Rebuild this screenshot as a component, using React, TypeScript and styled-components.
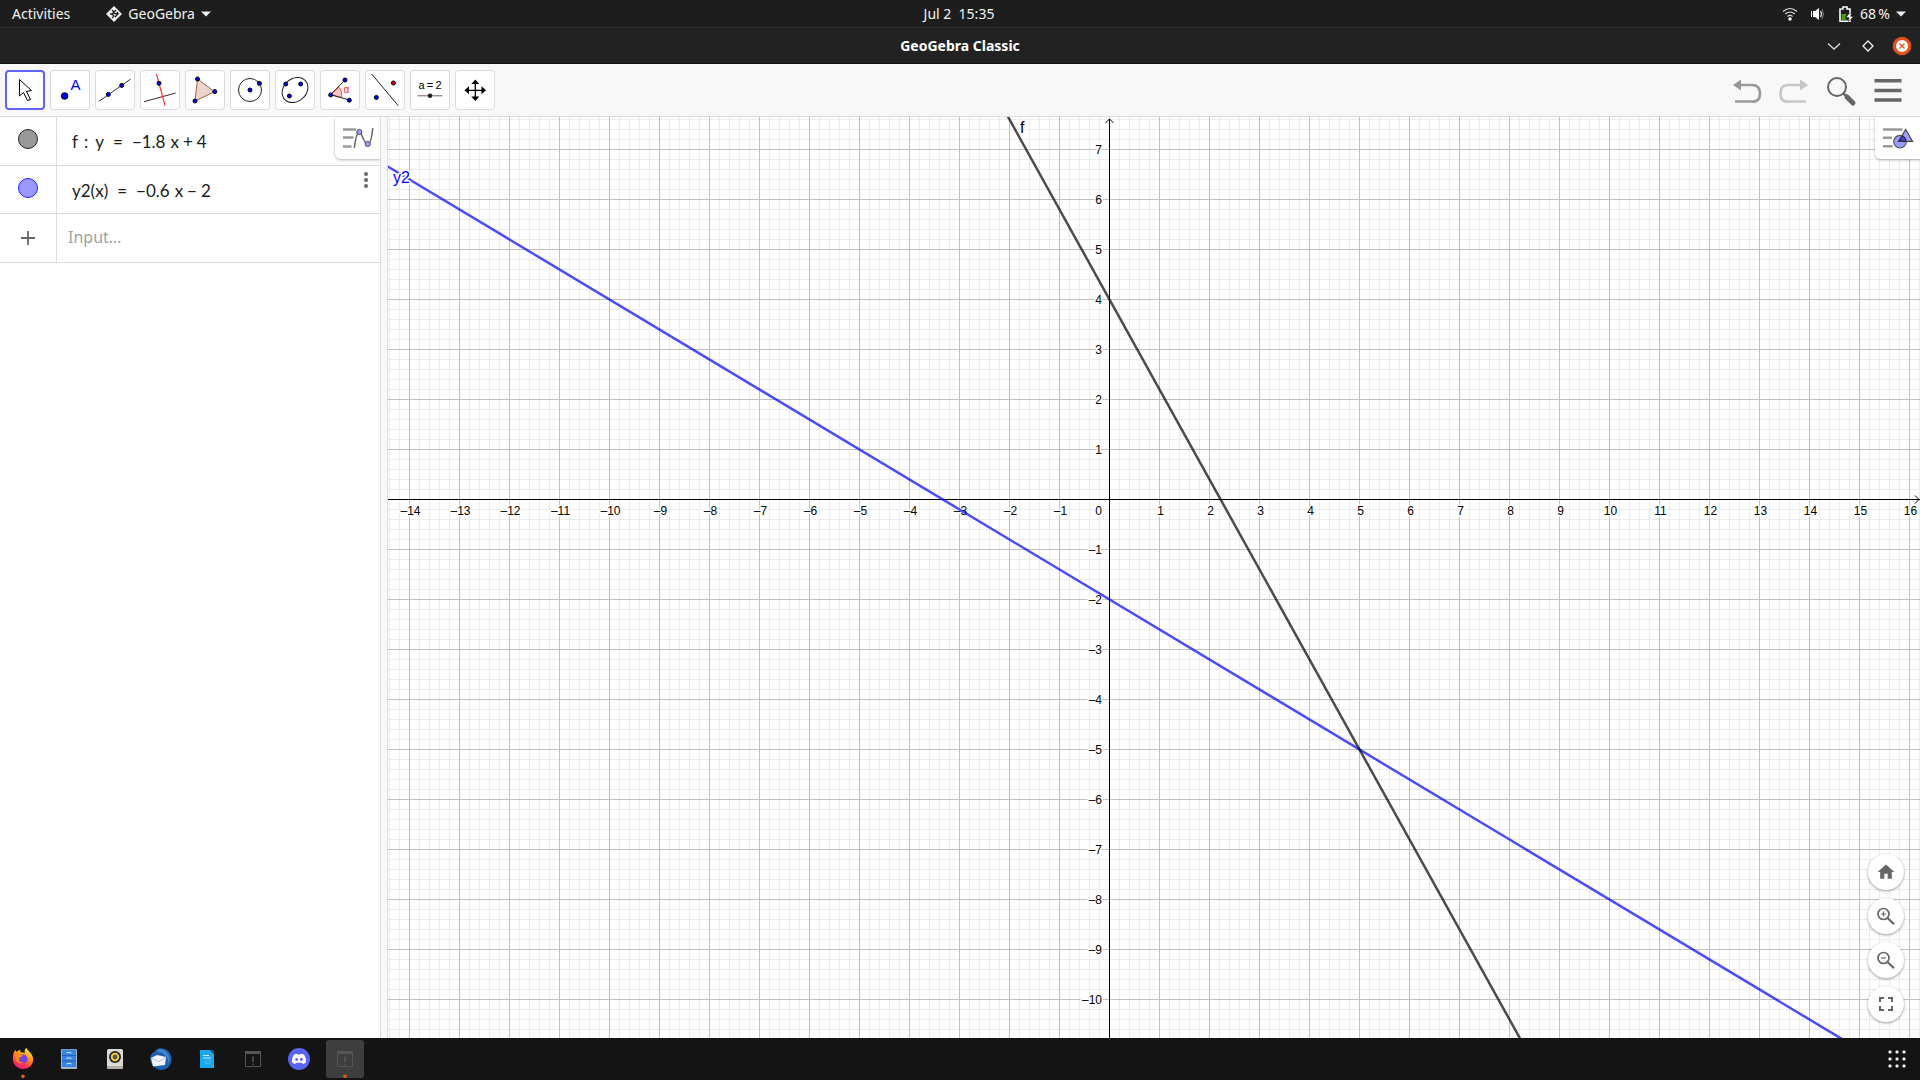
import React, { useLayoutEffect, useRef, useState } from "react";
import styled, { createGlobalStyle } from "styled-components";

const UI_FONT = '"Noto Sans", "Open Sans", sans-serif';
const PLOT_FONT = '"Liberation Sans", Arial, sans-serif';
const MATH_FONT = 'Lato, "Noto Sans", sans-serif';

const GlobalStyle = createGlobalStyle`
  * { box-sizing: border-box; }
  body { margin: 0; background: #fff; font-family: ${UI_FONT}; }
  button { font: inherit; color: inherit; margin: 0; padding: 0; border: 0; background: none; }
  svg { display: block; flex: none; }
`;

const Desktop = styled.div`
  display: flex;
  flex-direction: column;
  height: 100vh;
  overflow: hidden;
`;

/* ---------- system bar ---------- */

const SystemBar = styled.header`
  display: grid;
  grid-template-columns: 1fr auto 1fr;
  align-items: center;
  height: 28px;
  padding: 0 14px 0 12px;
  background: #1d1d1d;
  border-bottom: 1px solid #2e2e2e;
  color: #f2f2f2;
  font-size: 14px;
  line-height: 20px;
`;

const SystemGroup = styled.div<{ $end?: boolean }>`
  display: flex;
  align-items: center;
  gap: 36px;
  justify-content: ${(p) => (p.$end ? "flex-end" : "flex-start")};
`;

const SystemButton = styled.button`
  display: flex;
  align-items: center;
  gap: 6px;
  white-space: pre;
`;

const Indicators = styled.span`
  display: flex;
  align-items: center;
  gap: 12px;
`;

/* ---------- window title ---------- */

const TitleBar = styled.div`
  display: grid;
  grid-template-columns: 1fr auto 1fr;
  align-items: center;
  height: 36px;
  padding: 0 8px;
  background: #222;
  border-bottom: 1px solid #161616;
  color: #fff;
`;

const Title = styled.h1`
  grid-column: 2;
  margin: 0;
  font-size: 14px;
  line-height: 20px;
  font-weight: 700;
`;

const WindowControls = styled.div`
  display: flex;
  justify-content: flex-end;
  gap: 14px;
`;

/* ---------- toolbar ---------- */

const Toolbar = styled.nav`
  display: flex;
  justify-content: space-between;
  align-items: center;
  height: 53px;
  padding: 0 12px 0 5px;
  background: #f8f8f8;
  border-bottom: 1px solid #dcdcdc;
`;

const ToolGroup = styled.div<{ $gap: number }>`
  display: flex;
  gap: ${(p) => p.$gap}px;
`;

const ToolButton = styled.button<{ $selected?: boolean }>`
  width: 40px;
  height: 40px;
  border-radius: 4px;
  background: #fff;
  box-shadow: inset 0 0 0 ${(p) => (p.$selected ? "2px #6161ff" : "1px #dcdcdc")};
`;

const ActionButton = styled.button`
  width: 40px;
  height: 40px;
`;

/* ---------- workspace ---------- */

const Workspace = styled.main`
  display: flex;
  flex: 1;
  min-height: 0;
`;

const AlgebraPanel = styled.section`
  position: relative;
  width: 381px;
  flex: none;
  background: #fff;
  border-right: 1px solid #dcdcdc;
`;

const Splitter = styled.div`
  width: 7px;
  flex: none;
  background: #f8f8f8;
  border-right: 1px solid #dcdcdc;
`;

const StyleToggle = styled.button`
  position: absolute;
  top: 0;
  right: 0;
  width: 45px;
  height: 42px;
  background: #fff;
  border-radius: 0 0 0 6px;
  box-shadow: 0 1px 3px rgba(0, 0, 0, 0.3);
  clip-path: inset(0 0 -6px -6px);
`;

const Rows = styled.ul`
  margin: 0;
  padding: 0;
  list-style: none;
`;

const Row = styled.li<{ $height?: number }>`
  display: flex;
  height: ${(p) => p.$height ?? 49}px;
  border-bottom: 1px solid #dcdcdc;
`;

const MarkerCell = styled.div`
  display: flex;
  justify-content: center;
  width: 57px;
  padding-top: 12px;
  flex: none;
  border-right: 1px solid #dcdcdc;
`;

const Marker = styled.button<{ $fill: string; $line: string }>`
  width: 20px;
  height: 20px;
  border-radius: 50%;
  background: ${(p) => p.$fill};
  border: 1px solid ${(p) => p.$line};
`;

const AddButton = styled.button`
  width: 20px;
  height: 24px;
  color: #666;
`;

const Formula = styled.div`
  display: flex;
  align-items: center;
  flex: 1;
  padding: 2px 0 0 15px;
  font-family: ${MATH_FONT};
  font-size: 17px;
  line-height: 24px;
  color: #1c1c1c;
`;

const Relation = styled.span`
  margin: 0 9px;
`;

const Colon = styled.span`
  margin: 0 7px 0 6px;
`;

const Thin = styled.span`
  margin-left: 5px;
`;

const Operator = styled.span`
  margin: 0 4px;
`;

const MoreButton = styled.button`
  width: 20px;
  height: 28px;
  margin-right: 4px;
`;

const FormulaInput = styled.input`
  flex: 1;
  min-width: 0;
  border: 0;
  outline: 0;
  padding: 0 12px 3px 11px;
  background: transparent;
  font: 16px/24px ${UI_FONT};
  color: #1c1c1c;
  &::placeholder { color: #a0a0a0; opacity: 1; }
`;

/* ---------- graphics view ---------- */

const GraphPanel = styled.section`
  position: relative;
  flex: 1;
  min-width: 0;
  overflow: hidden;
  background: #fff;
`;

const Plot = styled.svg`
  width: 100%;
  height: 100%;
  font-family: ${PLOT_FONT};
  text {
    paint-order: stroke;
    stroke: #fff;
    stroke-width: 3px;
    stroke-linejoin: round;
  }
`;

const ViewButtons = styled.div`
  position: absolute;
  right: 16px;
  bottom: 16px;
  display: flex;
  flex-direction: column;
  gap: 8px;
`;

const RoundButton = styled.button`
  display: flex;
  align-items: center;
  justify-content: center;
  width: 36px;
  height: 36px;
  border-radius: 50%;
  background: #fff;
  color: #666;
  box-shadow: 0 1px 3px rgba(0, 0, 0, 0.4);
`;

/* ---------- dock ---------- */

const Dock = styled.footer`
  display: flex;
  align-items: center;
  justify-content: space-between;
  height: 42px;
  flex: none;
  padding: 0 4px;
  background: #141414;
`;

const DockApps = styled.div`
  display: flex;
  gap: 8px;
`;

const DockButton = styled.button<{ $active?: boolean }>`
  width: 38px;
  height: 38px;
  border-radius: 3px;
  background: ${(p) => (p.$active ? "#3e3e3e" : "transparent")};
`;

/* ---------- plot ---------- */

const UNIT = 50;
const ORIGIN_X = 721;
const ORIGIN_Y = 382;

const label = (n: number) => (n < 0 ? `–${-n}` : `${n}`);
const range = (from: number, to: number) =>
  Array.from({ length: Math.max(0, to - from + 1) }, (_, i) => from + i);

function Graph() {
  const ref = useRef<SVGSVGElement>(null);
  const [size, setSize] = useState({ w: 1532, h: 921 });

  useLayoutEffect(() => {
    const node = ref.current;
    if (!node) return;
    const measure = () => {
      const box = node.getBoundingClientRect();
      setSize({ w: Math.round(box.width), h: Math.round(box.height) });
    };
    measure();
    const observer = new ResizeObserver(measure);
    observer.observe(node);
    return () => observer.disconnect();
  }, []);

  const { w, h } = size;
  const px = (x: number) => ORIGIN_X + 0.5 + x * UNIT;
  const py = (y: number) => ORIGIN_Y + 0.5 - y * UNIT;
  const minX = Math.ceil(-ORIGIN_X / UNIT);
  const maxX = Math.floor((w - ORIGIN_X) / UNIT);
  const minY = -Math.floor((h - ORIGIN_Y) / UNIT);
  const maxY = Math.floor(ORIGIN_Y / UNIT);
  const minorX = range(minX * 5 - 4, maxX * 5 + 4);
  const minorY = range(minY * 5 - 4, maxY * 5 + 4);
  const path = (m: number, b: number) =>
    `M${px(-20)} ${py(m * -20 + b)}L${px(60)} ${py(m * 60 + b)}`;

  return (
    <Plot ref={ref} role="img" aria-label="Graphics view">
      <path
        stroke="#ececec"
        d={
          minorX.map((i) => `M${px(i / 5)} 0V${h}`).join("") +
          minorY.map((i) => `M0 ${py(i / 5)}H${w}`).join("")
        }
      />
      <path
        stroke="#c0c0c0"
        d={
          range(minX, maxX).map((i) => `M${px(i)} 0V${h}`).join("") +
          range(minY, maxY).map((i) => `M0 ${py(i)}H${w}`).join("")
        }
      />
      <g fontSize="12" fill="#000">
        {range(minX, maxX).filter((n) => n !== 0).map((n) => (
          <text key={`x${n}`} x={px(n) + 1} y={ORIGIN_Y + 16} textAnchor="middle">{label(n)}</text>
        ))}
        <text x={ORIGIN_X - 7} y={ORIGIN_Y + 16} textAnchor="end">0</text>
        {range(minY, maxY).filter((n) => n !== 0).map((n) => (
          <text key={`y${n}`} x={ORIGIN_X - 7} y={py(n) + 4} textAnchor="end">{label(n)}</text>
        ))}
      </g>
      <g stroke="#000" fill="none">
        <path d={`M0 ${py(0)}H${w}M${px(0)} ${h}V2`} />
        <path d={`M${px(0) - 4} 6L${px(0)} 2L${px(0) + 4} 6M${w - 5} ${py(0) - 4}L${w - 1} ${py(0)}L${w - 5} ${py(0) + 4}`} />
      </g>
      <path d={path(-0.6, -2)} stroke="#00f" strokeOpacity="0.7" strokeWidth="2.5" />
      <path d={path(-1.8, 4)} stroke="#000" strokeOpacity="0.7" strokeWidth="2.5" />
      <text x="5" y="66" fontSize="16" fill="#00f">y2</text>
      <text x="632" y="16" fontSize="16" fill="#000">f</text>
    </Plot>
  );
}

/* ---------- tool icons ---------- */

const Dot = ({ x, y, r = 2, fill = "#00f" }: { x: number; y: number; r?: number; fill?: string }) => (
  <circle cx={x} cy={y} r={r} fill={fill} stroke="#000" strokeWidth="1" />
);

const TOOLS: { name: string; icon: React.ReactNode }[] = [
  { name: "Move", icon: <path d="M14.500 9.500V26L18.500 22.500L22.500 30.500L25.500 29.500L21.500 21.500L26.500 20.500Z" fill="#fff" stroke="#000" /> },
  {
    name: "Point",
    icon: (
      <>
        <Dot x={14.6} y={26} r={3.3} />
        <text x="25.5" y="20" textAnchor="middle" fontSize="15" fontFamily={PLOT_FONT} fill="#00f">A</text>
      </>
    ),
  },
  { name: "Line", icon: <><path d="M4 31.300L35.700 9" stroke="#333" /><Dot x={13.3} y={24.4} /><Dot x={26.7} y={15.4} /></> },
  {
    name: "Perpendicular Line",
    icon: <><path d="M4 31.700L35.700 23" stroke="#422" /><path d="M16.500 4L25 35.700" stroke="#f33" strokeWidth="1.200" /><Dot x={19} y={13.3} /></>,
  },
  {
    name: "Polygon",
    icon: <><path d="M12.500 9L29.700 21.700L10 31Z" fill="#ead6cd" stroke="#a8603c" /><Dot x={12.5} y={9} /><Dot x={29.8} y={21.6} /><Dot x={10} y={31} /></>,
  },
  { name: "Circle with Center", icon: <><circle cx="20" cy="20" r="11.5" fill="none" stroke="#222" /><Dot x={20} y={20} /><Dot x={29.4} y={13.4} /></> },
  {
    name: "Ellipse",
    icon: <><ellipse cx="20" cy="20" rx="14" ry="11.3" transform="rotate(-42 20 20)" fill="none" stroke="#222" /><Dot x={10.8} y={14} /><Dot x={25.7} y={14} /><Dot x={14.4} y={26} /></>,
  },
  {
    name: "Angle",
    icon: (
      <>
        <path d="M10.700 24.700L18.700 17Q22.500 21 21.500 27.500Z" fill="#fcc4c4" stroke="#f44" />
        <path d="M25 10L10.700 24.700L29.300 30" stroke="#222" fill="none" />
        <Dot x={10.7} y={24.9} /><Dot x={25} y={10} /><Dot x={29.3} y={30.2} />
        <text x="26.300" y="23" textAnchor="middle" fontSize="10" fontFamily={PLOT_FONT} fill="#f22">α</text>
      </>
    ),
  },
  { name: "Reflect about Line", icon: <><path d="M6.700 4L33.300 35.700" stroke="#222" /><Dot x={11.4} y={27.4} /><Dot x={28.4} y={13} fill="#e00" /></> },
  {
    name: "Slider",
    icon: (
      <>
        <text x="20" y="18.500" textAnchor="middle" fontSize="11" fontFamily={PLOT_FONT} fill="#000">{"a\u2009=\u20092"}</text>
        <path d="M7.500 25.800H32.500" stroke="#666" /><circle cx="20" cy="25.800" r="2.300" fill="#222" />
      </>
    ),
  },
  {
    name: "Move Graphics View",
    icon: <><path d="M20.300 12V29M12 20.300H29" stroke="#000" strokeWidth="1.300" /><path d="M20.300 9.500L24.300 14H16.300ZM20.300 31L24.300 26.500H16.300ZM9.500 20.300L14 16.300V24.300ZM31 20.300L26.500 16.300V24.300Z" fill="#000" /></>,
  },
];

const Svg = ({ size = 40, view = size, children }: { size?: number; view?: number; children: React.ReactNode }) => (
  <svg width={size} height={size} viewBox={`0 0 ${view} ${view}`} fill="none" aria-hidden="true">{children}</svg>
);

const Caret = () => (
  <svg width="10" height="6" viewBox="0 0 10 6" aria-hidden="true"><path d="M0 0.500H10L5 5.500Z" fill="#f2f2f2" /></svg>
);

const AppWindowIcon = ({ color }: { color: string }) => (
  <>
    <path d="M11.500 12H26.500V26.500H11.500Z" stroke={color} />
    <path d="M11 12.500H27" stroke={color} strokeWidth="3" />
    <path d="M19 16.500V22M19 23.500V25" stroke={color} strokeWidth="1.600" />
  </>
);

const RunningDot = () => <circle cx="19" cy="36.300" r="1.800" fill="#e95420" />;

const DOCK: { name: string; active?: boolean; icon: React.ReactNode }[] = [
  {
    name: "Firefox",
    icon: (
      <>
        <defs>
          <linearGradient id="fox" x1="0.8" y1="0" x2="0.3" y2="1">
            <stop offset="0" stopColor="#fff44f" /><stop offset="0.4" stopColor="#ff980e" /><stop offset="0.75" stopColor="#ff3750" /><stop offset="1" stopColor="#e31587" />
          </linearGradient>
        </defs>
        <path d="M9 16C9 13 10.500 11 11.500 10L12.500 12L16 9.500L16.500 12L21 13C20 11 21 8.500 22.500 8C23.500 11 28 12.500 29 18C30 24 25.500 29 19 29C12.500 29 7.500 23 9 16Z" fill="url(#fox)" />
        <circle cx="19" cy="19" r="4.500" fill="#7542e5" />
        <path d="M11 15C14 13 17 15 19 15.500C18 17 15.500 17 15 18.500C14.500 21 17 23 20 22C16 25.500 10.500 22 11 15Z" fill="#ff8a16" />
        <RunningDot />
      </>
    ),
  },
  {
    name: "Files",
    icon: (
      <>
        <rect x="11" y="9" width="16" height="20" rx="1" fill="#a9b5bf" />
        <rect x="12" y="9.500" width="14" height="17.500" fill="#3584e4" />
        <path d="M12 15.500H26M12 21H26" stroke="#1f62b5" />
        <path d="M17 13.500V12.500H21V13.500M17 19V18H21V19M17 24.500V23.500H21V24.500" stroke="#cfe0f5" />
      </>
    ),
  },
  {
    name: "Rhythmbox",
    icon: (
      <>
        <rect x="11" y="9" width="16" height="20" rx="1.500" fill="#dcd9d4" />
        <path d="M11 26H27V28Q27 29 26 29H12Q11 29 11 28Z" fill="#b3afa8" />
        <circle cx="19" cy="17" r="6" fill="#26232a" /><circle cx="19" cy="17" r="3.300" stroke="#f6d32d" strokeWidth="1.800" fill="#55535a" />
      </>
    ),
  },
  {
    name: "Thunderbird",
    icon: (
      <>
        <path d="M15 9C23 6 30 12 29.500 20C29 26 25 30 19 30C12 29 7 23 8.500 16C10 12 12 13 15 9Z" fill="#1f5fae" />
        <path d="M17 9C24 9 29 15 27 24C25 15 22 12 15 12Z" fill="#3f88cc" />
        <path d="M9 18L15 15L24 17L23 25L11 26.500Z" fill="#f2f4f8" />
        <path d="M9 18L17 21.500L24 17" stroke="#b7c2d6" />
      </>
    ),
  },
  {
    name: "Writer",
    icon: (
      <>
        <path d="M12 10H22L26 14V28H12Z" fill="#1ba8f0" /><path d="M22 10H26V14Z" fill="#0c4f78" />
        <path d="M15 15.500H21M15 18H23" stroke="#c9ecff" /><path d="M16 21.500H23M17 23.500H22" stroke="#48b9f4" />
      </>
    ),
  },
  { name: "Application", icon: <AppWindowIcon color="#555" /> },
  {
    name: "Discord",
    icon: (
      <>
        <circle cx="19" cy="19" r="11" fill="#5865f2" />
        <path d="M14 14.500L17 13.700L17.500 14.500H20.500L21 13.700L24 14.500C25.500 17 26.300 19.500 26 22.500L23 24.200L22 22.700H16L15 24.200L12 22.500C11.700 19.500 12.500 17 14 14.500Z" fill="#fff" />
        <circle cx="16.600" cy="19.500" r="1.400" fill="#5865f2" /><circle cx="21.400" cy="19.500" r="1.400" fill="#5865f2" />
      </>
    ),
  },
  { name: "GeoGebra", active: true, icon: <><AppWindowIcon color="#565656" /><RunningDot /></> },
];

export default function App() {
  return (
    <Desktop>
      <GlobalStyle />
      <SystemBar>
        <SystemGroup>
          <SystemButton>Activities</SystemButton>
          <SystemButton>
            <Svg size={16}>
              <path d="M8 0L16 8L8 16L0 8Z" fill="#f2f2f2" />
              <path d="M6 4L8 6M10 4L7 7L12 8L9 11M4 8H6L8 10L6 12M11 6L12 7" stroke="#1d1d1d" strokeWidth="1.300" />
            </Svg>
            GeoGebra
            <Caret />
          </SystemButton>
        </SystemGroup>
        <SystemButton>{"Jul 2  15:35"}</SystemButton>
        <SystemGroup $end>
          <SystemButton aria-label="System menu">
            <Indicators>
              <Svg size={16}>
                <path d="M1 5.500Q8 -0.500 15 5.500M3.200 8Q8 4 12.800 8M5.400 10.500Q8 8.300 10.600 10.500" stroke="#ddd" strokeWidth="1.200" />
                <circle cx="8" cy="13" r="1.700" fill="#fff" />
              </Svg>
              <Svg size={16}>
                <path d="M3 5H5L9 2V14L5 11H3Z" fill="#fff" /><path d="M1.500 5V11" stroke="#fff" />
                <path d="M10.500 5Q12.500 8 10.500 11" stroke="#ddd" strokeWidth="1.300" /><path d="M12 3Q15 8 12 13" stroke="#777" />
              </Svg>
              <Svg size={16}>
                <path d="M2 3H5V1H9V3H12V15.200H2Z" stroke="#fff" strokeWidth="1.600" />
                <path d="M3.500 8H9L7 11.500L9 14H3.500Z" fill="#4e9a06" />
                <path d="M11.500 7L8 11.500H11L10.500 15.500L15.500 10.500H12.500L13.500 7Z" fill="#fff" stroke="#1d1d1d" strokeWidth="0.500" />
              </Svg>
            </Indicators>
            {"68\u2009%"}
            <Caret />
          </SystemButton>
        </SystemGroup>
      </SystemBar>

      <TitleBar>
        <Title>GeoGebra Classic</Title>
        <WindowControls>
          <button aria-label="Minimize"><Svg size={20}><path d="M4 7.500L10 13L16 7.500" stroke="#ddd" strokeWidth="1.300" /></Svg></button>
          <button aria-label="Maximize"><Svg size={20}><path d="M10 5L15 10L10 15L5 10Z" stroke="#eee" strokeWidth="1.300" /></Svg></button>
          <button aria-label="Close">
            <Svg size={20}>
              <circle cx="10" cy="10" r="9.300" fill="#e2501c" /><circle cx="10" cy="10" r="6" fill="#fff" />
              <path d="M7.500 7.500L12.500 12.500M12.500 7.500L7.500 12.500" stroke="#e2501c" strokeWidth="1.200" />
            </Svg>
          </button>
        </WindowControls>
      </TitleBar>

      <Toolbar>
        <ToolGroup $gap={5}>
          {TOOLS.map((tool, i) => (
            <ToolButton key={tool.name} aria-label={tool.name} $selected={i === 0}>
              <Svg>{tool.icon}</Svg>
            </ToolButton>
          ))}
        </ToolGroup>
        <ToolGroup $gap={7}>
          <ActionButton aria-label="Undo">
            <Svg><path d="M12 15H25Q33 15 33 23.500T25 31.500H8" stroke="#999" strokeWidth="2.700" /><path d="M6 15L14 9.500V20.500Z" fill="#999" /></Svg>
          </ActionButton>
          <ActionButton aria-label="Redo">
            <Svg><path d="M28 15H14Q6.500 15 6.500 23.500T14 31.500H32" stroke="#c6c6c6" strokeWidth="2.700" /><path d="M34 15L26 9.500V20.500Z" fill="#c6c6c6" /></Svg>
          </ActionButton>
          <ActionButton aria-label="Search">
            <Svg><circle cx="16" cy="17" r="9" stroke="#666" strokeWidth="2" /><path d="M22.500 23.500L26 27" stroke="#666" strokeWidth="2.500" /><path d="M26 27L32 33" stroke="#666" strokeWidth="5" strokeLinecap="round" /></Svg>
          </ActionButton>
          <ActionButton aria-label="Menu">
            <Svg><path d="M6.500 10.800H33.500M6.500 20.500H33.500M6.500 30H33.500" stroke="#666" strokeWidth="3.500" /></Svg>
          </ActionButton>
        </ToolGroup>
      </Toolbar>

      <Workspace>
        <AlgebraPanel aria-label="Algebra">
          <Rows>
            <Row>
              <MarkerCell><Marker aria-label="Show or hide f" $fill="#999" $line="#222" /></MarkerCell>
              <Formula>
                f<Colon>:</Colon>y<Relation>=</Relation>−1.8<Thin>x</Thin><Operator>+</Operator>4
              </Formula>
            </Row>
            <Row $height={48}>
              <MarkerCell><Marker aria-label="Show or hide y2" $fill="#9999ff" $line="#2222ff" /></MarkerCell>
              <Formula>
                y2(x)<Relation>=</Relation>−0.6<Thin>x</Thin><Operator>−</Operator>2
              </Formula>
              <MoreButton aria-label="More options">
                <svg width="20" height="28" viewBox="0 0 20 28" aria-hidden="true">
                  <g fill="#666"><circle cx="10" cy="8" r="2" /><circle cx="10" cy="14" r="2" /><circle cx="10" cy="20" r="2" /></g>
                </svg>
              </MoreButton>
            </Row>
            <Row>
              <MarkerCell>
                <AddButton aria-label="Add item">
                  <svg width="20" height="24" viewBox="0 0 20 24" aria-hidden="true"><path d="M3 12H17M10 5V19" stroke="#666" strokeWidth="1.800" /></svg>
                </AddButton>
              </MarkerCell>
              <FormulaInput aria-label="Input" placeholder="Input…" />
            </Row>
          </Rows>
          <StyleToggle aria-label="Algebra style bar">
            <svg width="45" height="42" viewBox="0 0 45 42" fill="none" aria-hidden="true">
              <path d="M8 12.500H21M8 20.500H18.500M8 29.500H16.500" stroke="#999" strokeWidth="2.500" />
              <path d="M19.300 31C20.500 22 22 15 24.300 15C27 15 28.500 27 32.700 27C35.500 27 37 19 37.700 11" stroke="#666" strokeWidth="1.500" />
              <circle cx="24.300" cy="15" r="2.600" fill="#9999ff" stroke="#555" /><circle cx="32.700" cy="27" r="2.600" fill="#9999ff" stroke="#555" />
            </svg>
          </StyleToggle>
        </AlgebraPanel>
        <Splitter />
        <GraphPanel>
          <Graph />
          <StyleToggle aria-label="Graphics style bar">
            <svg width="45" height="42" viewBox="0 0 45 42" fill="none" aria-hidden="true">
              <path d="M8 12.500H27.500M8 20.700H17M8 29.300H17.500" stroke="#999" strokeWidth="2.500" />
              <circle cx="25" cy="24.700" r="6.300" fill="#9999ff" stroke="#555" strokeWidth="1.200" />
              <path d="M30.700 12.500L37.500 24.300H23.500Z" fill="#7777ff" fillOpacity="0.700" stroke="#444" strokeWidth="1.200" />
              <path d="M24 24L28 18.800Q31 21 31 24Z" fill="#4444e0" stroke="#222" />
            </svg>
          </StyleToggle>
          <ViewButtons>
            <RoundButton aria-label="Standard view">
              <Svg size={20} view={24}><path d="M10 20V14H14V20H19V12H22L12 3L2 12H5V20Z" fill="#666" /></Svg>
            </RoundButton>
            <RoundButton aria-label="Zoom in">
              <Svg size={20}><circle cx="7.500" cy="8" r="5.500" stroke="#666" strokeWidth="1.700" /><path d="M11.500 12L18 18.300" stroke="#666" strokeWidth="2.200" /><path d="M5 8H10M7.500 5.500V10.500" stroke="#666" strokeWidth="1.200" /></Svg>
            </RoundButton>
            <RoundButton aria-label="Zoom out">
              <Svg size={20}><circle cx="7.500" cy="8" r="5.500" stroke="#666" strokeWidth="1.700" /><path d="M11.500 12L18 18.300" stroke="#666" strokeWidth="2.200" /><path d="M5 8H10" stroke="#666" strokeWidth="1.200" /></Svg>
            </RoundButton>
            <RoundButton aria-label="Fullscreen">
              <Svg size={20}><path d="M4 8V4H8M12 4H16V8M16 12V16H12M8 16H4V12" stroke="#666" strokeWidth="2" /></Svg>
            </RoundButton>
          </ViewButtons>
        </GraphPanel>
      </Workspace>

      <Dock>
        <DockApps>
          {DOCK.map((app) => (
            <DockButton key={app.name} aria-label={app.name} $active={app.active}>
              <Svg size={38}>{app.icon}</Svg>
            </DockButton>
          ))}
        </DockApps>
        <DockButton aria-label="Show applications">
          <Svg size={38}>
            {[12, 19, 26].map((y) => [12, 19, 26].map((x) => (
              <rect key={`${x}-${y}`} x={x - 1.5} y={y - 1.5} width="3" height="3" rx="1" fill="#f2f2f2" />
            )))}
          </Svg>
        </DockButton>
      </Dock>
    </Desktop>
  );
}
